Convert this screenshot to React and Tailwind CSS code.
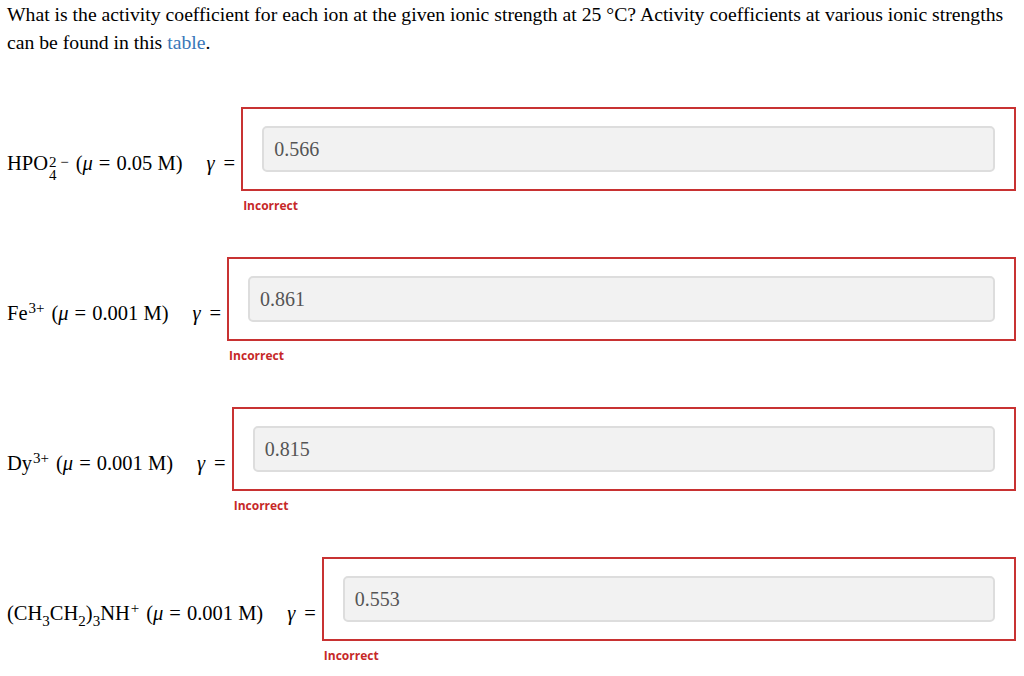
import React from "react";

const serif = { fontFamily: '"Liberation Serif", "Times New Roman", serif' };

// stacked super/subscript, e.g. PO4^2-
function SupSub({ sup, sub }) {
  return (
    <span className="inline-flex flex-col align-middle leading-none text-[15px] ml-[1px] relative top-[2px]">
      <span className="h-[13px]">{sup}</span>
      <span className="h-[12px]">{sub}</span>
    </span>
  );
}

function Sup({ children }) {
  return <sup className="text-[15px] ml-[1px]">{children}</sup>;
}

function Sub({ children }) {
  return <sub className="text-[15px] bottom-[-6px]">{children}</sub>;
}

function Strength({ value }) {
  return (
    <span className="ml-[7px]">
      (<i>μ</i>
      <span className="mx-[6px]">=</span>
      {value} M)
    </span>
  );
}

function Row({ label, value }) {
  return (
    <div className="flex items-start">
      <div
        className="whitespace-nowrap text-[20.5px] leading-[24px] mt-[44px] text-black"
        style={serif}
      >
        {label}
        <span className="ml-[24px]">
          <i>γ</i>
          <span className="ml-[9px]">=</span>
        </span>
      </div>
      <div className="flex-1 ml-[6px]">
        <div className="border-2 border-[#c83232] px-[19px] py-[17px]">
          <div
            className="h-[46px] bg-[#f2f2f2] border-2 border-[#dddddd] rounded-[5px] px-[10px] pt-[9px] text-[20px] leading-[24px] text-[#555555]"
            style={serif}
          >
            {value}
          </div>
        </div>
        <div
          className="mt-[7px] ml-[2px] text-[12px] leading-[16px] font-bold text-[#c62828]"
          style={{ fontFamily: '"Open Sans", "Noto Sans", sans-serif' }}
        >
          Incorrect
        </div>
      </div>
    </div>
  );
}

export default function App() {
  const rows = [
    {
      label: (
        <>
          HPO
          <SupSub sup="2 −" sub="4" />
          <Strength value="0.05" />
        </>
      ),
      value: "0.566",
    },
    {
      label: (
        <>
          Fe<Sup>3+</Sup>
          <Strength value="0.001" />
        </>
      ),
      value: "0.861",
    },
    {
      label: (
        <>
          Dy<Sup>3+</Sup>
          <Strength value="0.001" />
        </>
      ),
      value: "0.815",
    },
    {
      label: (
        <>
          (CH<Sub>3</Sub>CH<Sub>2</Sub>)<Sub>3</Sub>NH<Sup>+</Sup>
          <Strength value="0.001" />
        </>
      ),
      value: "0.553",
    },
  ];

  return (
    <div className="w-[1024px] h-[676px] bg-white pl-[7px] pr-[8px] overflow-hidden">
      <p className="text-[19.7px] leading-[28px] text-black" style={serif}>
        What is the activity coefficient for each ion at the given ionic
        strength at 25 °C? Activity coefficients at various ionic strengths
        can be found in this <span className="text-[#3a76b8]">table</span>.
      </p>
      <div className="mt-[51px] flex flex-col gap-[43px]">
        {rows.map((r, i) => (
          <Row key={i} label={r.label} value={r.value} />
        ))}
      </div>
    </div>
  );
}
